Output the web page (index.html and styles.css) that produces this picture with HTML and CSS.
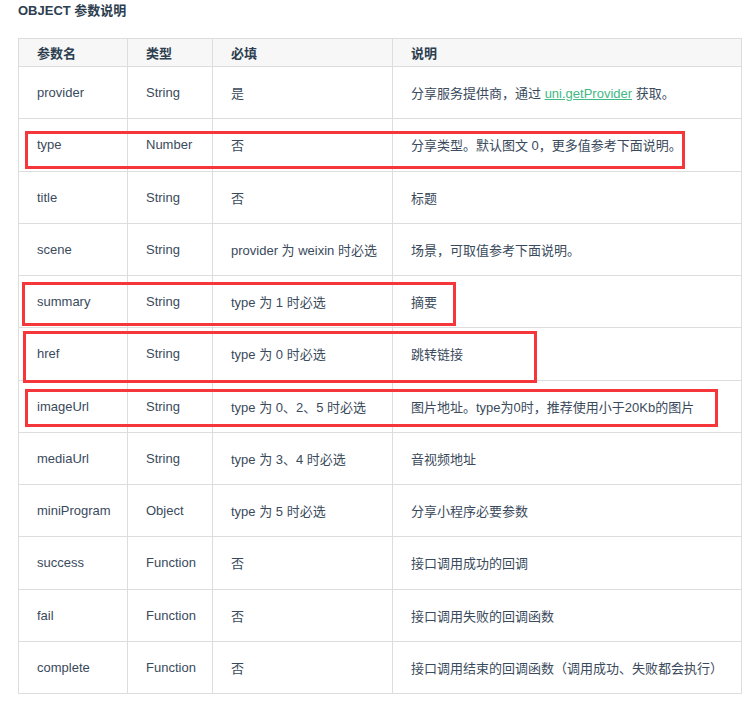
FILE: index.html
```html
<!DOCTYPE html>
<html lang="zh-CN">
<head>
<meta charset="utf-8">
<title>OBJECT 参数说明</title>
<link rel="stylesheet" href="styles.css">
</head>
<body>
<div class="page">
  <h4 class="title">OBJECT 参数说明</h4>
  <div class="table-wrap">
    <table class="params">
      <colgroup>
        <col class="c1"><col class="c2"><col class="c3"><col class="c4">
      </colgroup>
      <thead>
        <tr><th>参数名</th><th>类型</th><th>必填</th><th>说明</th></tr>
      </thead>
      <tbody>
        <tr><td>provider</td><td>String</td><td>是</td><td>分享服务提供商，通过 <a href="#" class="link">uni.getProvider</a> 获取。</td></tr>
        <tr><td>type</td><td>Number</td><td>否</td><td>分享类型。默认图文 0，更多值参考下面说明。</td></tr>
        <tr><td>title</td><td>String</td><td>否</td><td>标题</td></tr>
        <tr><td>scene</td><td>String</td><td>provider 为 weixin 时必选</td><td>场景，可取值参考下面说明。</td></tr>
        <tr><td>summary</td><td>String</td><td>type 为 1 时必选</td><td>摘要</td></tr>
        <tr><td>href</td><td>String</td><td>type 为 0 时必选</td><td>跳转链接</td></tr>
        <tr><td>imageUrl</td><td>String</td><td>type 为 0、2、5 时必选</td><td>图片地址。type为0时，推荐使用小于20Kb的图片</td></tr>
        <tr><td>mediaUrl</td><td>String</td><td>type 为 3、4 时必选</td><td>音视频地址</td></tr>
        <tr><td>miniProgram</td><td>Object</td><td>type 为 5 时必选</td><td>分享小程序必要参数</td></tr>
        <tr><td>success</td><td>Function</td><td>否</td><td>接口调用成功的回调</td></tr>
        <tr><td>fail</td><td>Function</td><td>否</td><td>接口调用失败的回调函数</td></tr>
        <tr><td>complete</td><td>Function</td><td>否</td><td>接口调用结束的回调函数（调用成功、失败都会执行）</td></tr>
      </tbody>
    </table>
    <div class="mark mark-type"></div>
    <div class="mark mark-summary"></div>
    <div class="mark mark-href"></div>
    <div class="mark mark-image"></div>
  </div>
</div>
</body>
</html>
```

FILE: styles.css
```css
html, body {
  margin: 0;
  padding: 0;
  background: #ffffff;
}

body {
  font-family: "Liberation Sans", Arial, "Noto Sans CJK SC", sans-serif;
  font-size: 13px;
  color: #3a4a5c;
}

.page {
  padding: 0 5px 0 18px;
}

.title {
  margin: 0;
  font-size: 13px;
  line-height: 22px;
  font-weight: bold;
  color: #2c3e50;
}

.table-wrap {
  position: relative;
  margin-top: 16px;
  width: 723px;
}

.params {
  border-collapse: collapse;
  table-layout: fixed;
  width: 723px;
}

.c1 { width: 109px; }
.c2 { width: 85px; }
.c3 { width: 180px; }
.c4 { width: 349px; }

.params th,
.params td {
  border: 1px solid #dddddd;
  text-align: left;
  padding: 0 18px;
  white-space: nowrap;
}

.params th {
  background: #f7f7f7;
  font-weight: bold;
  height: 27px;
  color: #2c3e50;
}

.params td {
  height: 51.25px;
}

.link {
  color: #42b983;
  text-decoration: underline;
}

.mark {
  position: absolute;
  border: 3px solid #f5363a;
  box-sizing: border-box;
  pointer-events: none;
}

.mark-type { left: 7px; top: 93px; width: 660px; height: 38px; }
.mark-summary { left: 4px; top: 244px; width: 434px; height: 44px; }
.mark-href { left: 5px; top: 293px; width: 514px; height: 52px; }
.mark-image { left: 7px; top: 351px; width: 693px; height: 38px; }
```
